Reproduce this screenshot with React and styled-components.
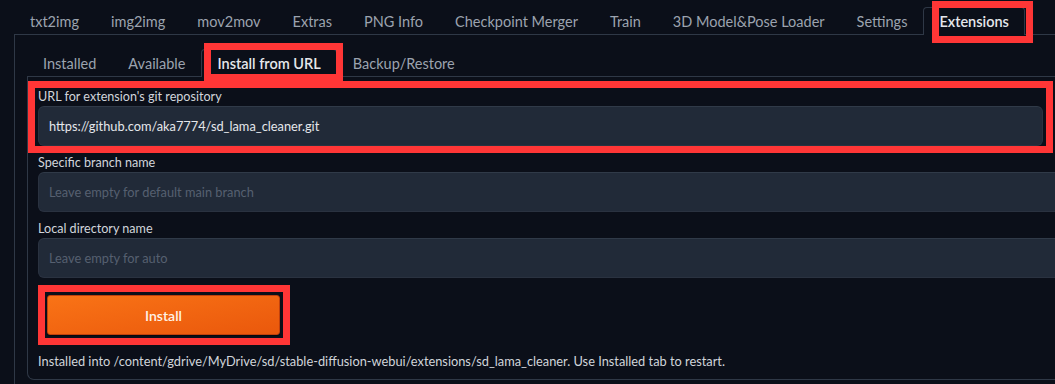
import React from "react";
import styled, { createGlobalStyle, css } from "styled-components";

const GlobalStyle = createGlobalStyle`
  html, body {
    margin: 0;
    background: #0b0f19;
    overflow: hidden;
  }
  body {
    font-family: "Source Sans Pro", "Lato", "Noto Sans", sans-serif;
    color: #d1d5db;
  }
`;

// red annotation rectangle drawn over an element
const marked = css`
  position: relative;
  &::after {
    content: "";
    position: absolute;
    top: ${(p) => p.$box[0]}px;
    right: ${(p) => p.$box[1]}px;
    bottom: ${(p) => p.$box[2]}px;
    left: ${(p) => p.$box[3]}px;
    border: 7px solid #ff3636;
    pointer-events: none;
  }
`;

const Page = styled.div`
  width: 1110px;
  padding: 7px 0 0 14px;
`;

const TabBar = styled.div`
  display: flex;
  border-bottom: 1px solid #2f3846;
  height: 27px;
`;

const Tab = styled.button`
  font: inherit;
  font-size: 14.5px;
  background: transparent;
  border: 1px solid transparent;
  border-bottom: none;
  color: #9ca3af;
  padding: 0 15px;
  height: 28px;
  border-radius: 4px 4px 0 0;
  white-space: nowrap;
  ${(p) =>
    p.$active &&
    css`
      color: #e5e7eb;
      font-weight: 600;
      background: #0b0f19;
      border-color: #2f3846;
    `}
  ${(p) => p.$box && marked}
`;

const Panel = styled.div`
  border-left: 1px solid #2f3846;
  padding: 14px 0 0 12px;
  height: 360px;
`;

const SubTabBar = styled.div`
  display: flex;
  border-bottom: 1px solid #2f3846;
  height: 27px;
`;

const SubPanel = styled.div`
  border: 1px solid #2f3846;
  border-top: none;
  border-radius: 0 0 7px 7px;
  padding: 11px 10px 10px;
  display: flex;
  flex-direction: column;
  gap: 8px;
`;

const Field = styled.div`
  display: flex;
  flex-direction: column;
  ${(p) =>
    p.$box &&
    css`
      width: 1011px;
      margin-left: -3px;
      padding: 0 3px;
      box-sizing: border-box;
      ${marked}
    `}
`;

const Label = styled.label`
  font-size: 12.6px;
  line-height: 18px;
  color: #d1d5db;
`;

const Input = styled.input`
  box-sizing: border-box;
  width: 100%;
  height: 40px;
  background: #212a38;
  border: 1px solid #2a3240;
  border-top-color: #303a48;
  border-radius: 6px;
  padding: 0 10px;
  font-family: inherit;
  font-size: 12.8px;
  color: #e5e7eb;
  outline: none;
  &::placeholder {
    color: #566070;
  }
`;

const Button = styled.button`
  ${marked}
  width: 233px;
  height: 40px;
  margin: 9px 0 0 9px;
  border: 1px solid #c2410c;
  border-radius: 3px;
  background: linear-gradient(to bottom right, #f97316, #ea580c);
  box-shadow: 0 1px 1px rgba(0, 0, 0, 0.5);
  color: #fff3e6;
  font: inherit;
  font-size: 14px;
  font-weight: 600;
`;

const Message = styled.div`
  font-size: 12.8px;
  line-height: 16px;
  margin-top: 10px;
  color: #d1d5db;
`;

const mainTabs = [
  "txt2img",
  "img2img",
  "mov2mov",
  "Extras",
  "PNG Info",
  "Checkpoint Merger",
  "Train",
  "3D Model&Pose Loader",
  "Settings",
  "Extensions",
];

const subTabs = ["Installed", "Available", "Install from URL", "Backup/Restore"];

export default function App() {
  return (
    <>
      <GlobalStyle />
      <Page>
        <TabBar>
          {mainTabs.map((t) =>
            t === "Extensions" ? (
              <Tab key={t} $active $box={[-7, -9, -8, 8]}>
                {t}
              </Tab>
            ) : (
              <Tab key={t}>{t}</Tab>
            )
          )}
        </TabBar>
        <Panel>
          <SubTabBar>
            {subTabs.map((t) =>
              t === "Install from URL" ? (
                <Tab key={t} $active $box={[-7, -7, -4, 2]}>
                  {t}
                </Tab>
              ) : (
                <Tab key={t}>{t}</Tab>
              )
            )}
          </SubTabBar>
          <SubPanel>
            <Field $box={[-7, -7, -7, -7]}>
              <Label>URL for extension's git repository</Label>
              <Input defaultValue="https://github.com/aka7774/sd_lama_cleaner.git" />
            </Field>
            <Field>
              <Label>Specific branch name</Label>
              <Input placeholder="Leave empty for default main branch" />
            </Field>
            <Field>
              <Label>Local directory name</Label>
              <Input placeholder="Leave empty for auto" />
            </Field>
            <div>
              <Button $box={[-11, -11, -11, -10]}>Install</Button>
            </div>
            <Message>
              Installed into
              /content/gdrive/MyDrive/sd/stable-diffusion-webui/extensions/sd_lama_cleaner.
              Use Installed tab to restart.
            </Message>
          </SubPanel>
        </Panel>
      </Page>
    </>
  );
}
